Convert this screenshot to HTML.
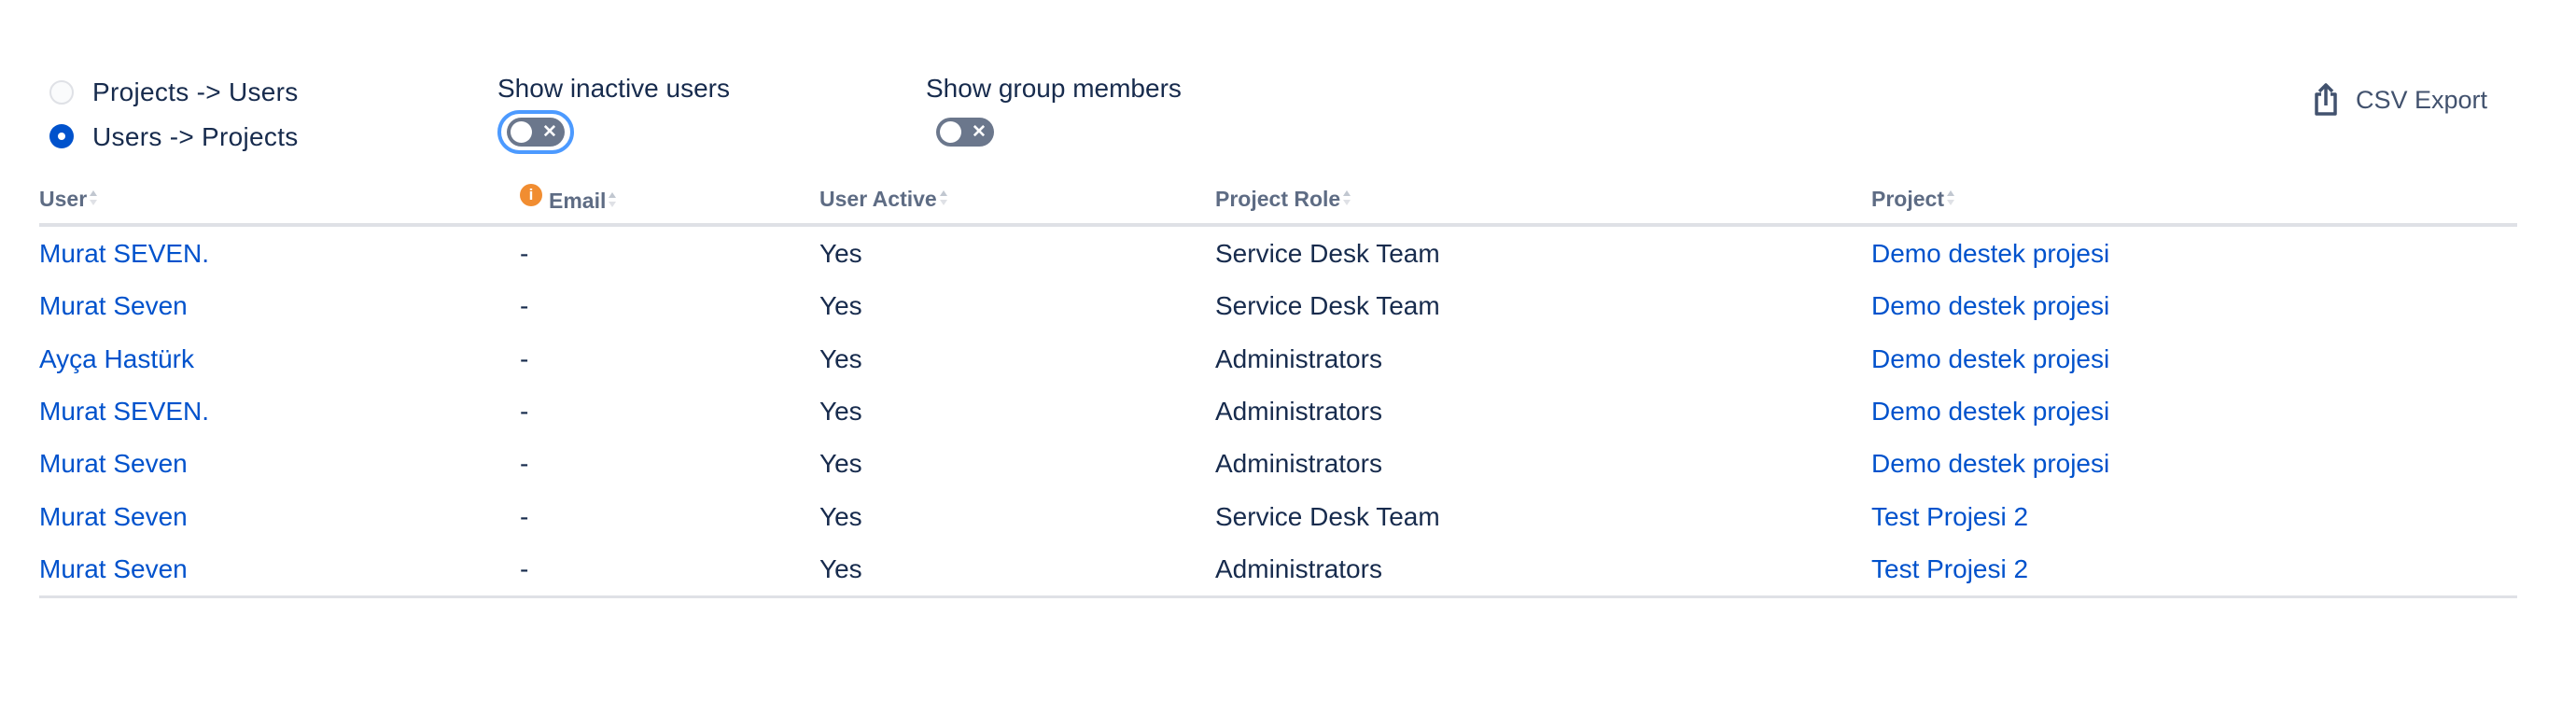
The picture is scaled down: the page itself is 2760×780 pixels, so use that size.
<!DOCTYPE html>
<html><head><meta charset="utf-8"><style>
*{margin:0;padding:0;box-sizing:border-box}
body{width:2760px;height:780px;background:#fff;position:relative;overflow:hidden;font-family:"Liberation Sans",sans-serif}
.a{position:absolute;white-space:nowrap}
.t{font-size:28px;color:#172b4d;line-height:32px}
.b{color:#0052cc}
.h{font-size:23px;font-weight:bold;color:#5e6c84;line-height:26px}
.sort{display:inline-block;width:10px;height:18px;vertical-align:middle;margin-left:2px;position:relative;top:-2px}
.sort:before{content:"";position:absolute;left:1px;top:0;border:4px solid transparent;border-bottom:6px solid #c1c7d0;border-top:0}
.sort:after{content:"";position:absolute;left:1px;top:10px;border:4px solid transparent;border-top:6px solid #dfe1e6;border-bottom:0}
.tog{position:absolute;width:62px;height:31px;border-radius:16px;background:#6b778c}
.tog i{position:absolute;left:4px;top:4px;width:23px;height:23px;border-radius:50%;background:#fff}
.tog span{position:absolute;left:38px;top:3px;color:#fff;font-size:19px;font-weight:bold;line-height:26px}
.line{position:absolute;left:42px;width:2668px;background:#dfe1e6}
</style></head><body>
<div class="a" style="left:53px;top:86px;width:26px;height:26px;border-radius:50%;border:2px solid #dfe1e6;background:#fafbfc"></div>
<div class="a t" style="left:99px;top:83px;letter-spacing:0.3px">Projects -&gt; Users</div>
<div class="a" style="left:53px;top:133px;width:26px;height:26px;border-radius:50%;background:#0052cc"></div>
<div class="a" style="left:62px;top:142px;width:8px;height:8px;border-radius:50%;background:#fff"></div>
<div class="a t" style="left:99px;top:131px;letter-spacing:0.3px">Users -&gt; Projects</div>

<div class="a t" style="left:533px;top:79px">Show inactive users</div>
<div class="a" style="left:533px;top:118px;width:82px;height:47px;border-radius:24px;border:4px solid #4c9aff"></div>
<div class="tog" style="left:543px;top:126px"><i></i><span>✕</span></div>

<div class="a t" style="left:992px;top:79px">Show group members</div>
<div class="tog" style="left:1003px;top:126px"><i></i><span>✕</span></div>

<svg class="a" style="left:2477px;top:87px" width="30" height="38" viewBox="0 0 30 38"><path d="M10 14H5v21h20V14h-5" fill="none" stroke="#42526e" stroke-width="3.5" stroke-linejoin="round"/><path d="M15 26V4M8 11l7-7 7 7" fill="none" stroke="#42526e" stroke-width="3.5" stroke-linejoin="round"/></svg>
<div class="a" style="left:2524px;top:91px;font-size:27px;color:#42526e;line-height:32px">CSV Export</div>

<div class="a h" style="left:42px;top:200px">User<span class="sort"></span></div>
<div class="a" style="left:557px;top:197px;width:24px;height:24px;border-radius:50%;background:#f18d31;color:#fff;font-size:17px;font-weight:bold;text-align:center;line-height:24px">i</div>
<div class="a h" style="left:588px;top:202px">Email<span class="sort"></span></div>
<div class="a h" style="left:878px;top:200px">User Active<span class="sort"></span></div>
<div class="a h" style="left:1302px;top:200px">Project Role<span class="sort"></span></div>
<div class="a h" style="left:2005px;top:200px">Project<span class="sort"></span></div>
<div class="line" style="top:239px;height:4px;width:2655px"></div>

<div class="a t b" style="left:42px;top:256px">Murat SEVEN.</div><div class="a t" style="left:557px;top:256px">-</div><div class="a t" style="left:878px;top:256px">Yes</div><div class="a t" style="left:1302px;top:256px">Service Desk Team</div><div class="a t b" style="left:2005px;top:256px">Demo destek projesi</div>
<div class="a t b" style="left:42px;top:312px">Murat Seven</div><div class="a t" style="left:557px;top:312px">-</div><div class="a t" style="left:878px;top:312px">Yes</div><div class="a t" style="left:1302px;top:312px">Service Desk Team</div><div class="a t b" style="left:2005px;top:312px">Demo destek projesi</div>
<div class="a t b" style="left:42px;top:369px">Ayça Hastürk</div><div class="a t" style="left:557px;top:369px">-</div><div class="a t" style="left:878px;top:369px">Yes</div><div class="a t" style="left:1302px;top:369px">Administrators</div><div class="a t b" style="left:2005px;top:369px">Demo destek projesi</div>
<div class="a t b" style="left:42px;top:425px">Murat SEVEN.</div><div class="a t" style="left:557px;top:425px">-</div><div class="a t" style="left:878px;top:425px">Yes</div><div class="a t" style="left:1302px;top:425px">Administrators</div><div class="a t b" style="left:2005px;top:425px">Demo destek projesi</div>
<div class="a t b" style="left:42px;top:481px">Murat Seven</div><div class="a t" style="left:557px;top:481px">-</div><div class="a t" style="left:878px;top:481px">Yes</div><div class="a t" style="left:1302px;top:481px">Administrators</div><div class="a t b" style="left:2005px;top:481px">Demo destek projesi</div>
<div class="a t b" style="left:42px;top:538px">Murat Seven</div><div class="a t" style="left:557px;top:538px">-</div><div class="a t" style="left:878px;top:538px">Yes</div><div class="a t" style="left:1302px;top:538px">Service Desk Team</div><div class="a t b" style="left:2005px;top:538px">Test Projesi 2</div>
<div class="a t b" style="left:42px;top:594px">Murat Seven</div><div class="a t" style="left:557px;top:594px">-</div><div class="a t" style="left:878px;top:594px">Yes</div><div class="a t" style="left:1302px;top:594px">Administrators</div><div class="a t b" style="left:2005px;top:594px">Test Projesi 2</div>
<div class="line" style="top:638px;height:3px;width:2655px"></div>
</body></html>
